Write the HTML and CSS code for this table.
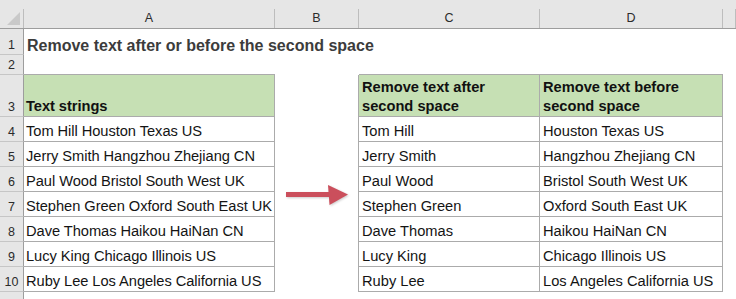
FILE: index.html
```html
<!DOCTYPE html>
<html>
<head>
<meta charset="utf-8">
<link rel="stylesheet" href="styles.css">
</head>
<body>
<div class="sheet">
  <div class="ch corner"><span><svg class="tri" width="13" height="13" viewBox="0 0 13 13"><polygon points="13,0 13,13 0,13" fill="#c9c9c9"/></svg></span></div>
  <div class="ch"><span>A</span></div>
  <div class="ch"><span>B</span></div>
  <div class="ch"><span>C</span></div>
  <div class="ch"><span>D</span></div>
  <div class="ch"><span></span></div>

  <div class="rh">1</div>
  <div class="title">Remove text after or before the second space</div>

  <div class="rh">2</div>
  <div class="cell top"></div>
  <div class="cell"></div>
  <div class="cell top"></div>
  <div class="cell top"></div>
  <div class="cell"></div>

  <div class="rh">3</div>
  <div class="cell t hd ca">Text strings</div>
  <div class="cell gap"></div>
  <div class="cell t hd">Remove text after<br>second space</div>
  <div class="cell t hd">Remove text before<br>second space</div>
  <div class="cell"></div>

  <div class="rh">4</div>
  <div class="cell t ca">Tom Hill Houston Texas US</div>
  <div class="cell gap"></div>
  <div class="cell t">Tom Hill</div>
  <div class="cell t">Houston Texas US</div>
  <div class="cell"></div>

  <div class="rh">5</div>
  <div class="cell t ca">Jerry Smith Hangzhou Zhejiang CN</div>
  <div class="cell gap"></div>
  <div class="cell t">Jerry Smith</div>
  <div class="cell t">Hangzhou Zhejiang CN</div>
  <div class="cell"></div>

  <div class="rh">6</div>
  <div class="cell t ca">Paul Wood Bristol South West UK</div>
  <div class="cell gap"></div>
  <div class="cell t">Paul Wood</div>
  <div class="cell t">Bristol South West UK</div>
  <div class="cell"></div>

  <div class="rh">7</div>
  <div class="cell t ca">Stephen Green Oxford South East UK</div>
  <div class="cell gap"></div>
  <div class="cell t">Stephen Green</div>
  <div class="cell t">Oxford South East UK</div>
  <div class="cell"></div>

  <div class="rh">8</div>
  <div class="cell t ca">Dave Thomas Haikou HaiNan CN</div>
  <div class="cell gap"></div>
  <div class="cell t">Dave Thomas</div>
  <div class="cell t">Haikou HaiNan CN</div>
  <div class="cell"></div>

  <div class="rh">9</div>
  <div class="cell t ca">Lucy King Chicago Illinois US</div>
  <div class="cell gap"></div>
  <div class="cell t">Lucy King</div>
  <div class="cell t">Chicago Illinois US</div>
  <div class="cell"></div>

  <div class="rh">10</div>
  <div class="cell t ca">Ruby Lee Los Angeles California US</div>
  <div class="cell gap"></div>
  <div class="cell t">Ruby Lee</div>
  <div class="cell t">Los Angeles California US</div>
  <div class="cell"></div>

  <div class="rh"></div>
  <div class="cell"></div>
  <div class="cell"></div>
  <div class="cell"></div>
  <div class="cell"></div>
  <div class="cell"></div>

  <svg class="arrow" width="70" height="30" viewBox="0 0 70 30">
    <rect x="2" y="10" width="45" height="5" fill="#cb4f5c"/>
    <polygon points="44,3 64,12.5 45.5,23" fill="#cb4f5c"/>
  </svg>
</div>
</body>
</html>
```

FILE: styles.css
```css
html, body {
  margin: 0;
  padding: 0;
  background: #ffffff;
  overflow: hidden;
}

.sheet {
  position: relative;
  display: grid;
  grid-template-columns: 24px 251px 84px 181px 183px 13px;
  grid-template-rows: 29px 26px 20px 42px repeat(7, 25px) 25px;
  font-family: "Liberation Sans", Arial, sans-serif;
  color: #141414;
  width: 736px;
  height: 299px;
  overflow: hidden;
}

.ch {
  background: #e6e6e6;
  border-bottom: 1px solid #9d9d9d;
  padding-top: 9px;
  box-sizing: border-box;
}

.ch span {
  display: block;
  height: 100%;
  box-sizing: border-box;
  border-right: 1px solid #bdbdbd;
  text-align: center;
  font-size: 12.5px;
  line-height: 19px;
  color: #2b2b2b;
}

.corner span {
  border-right-color: #bdbdbd;
  display: flex;
  align-items: flex-end;
  justify-content: flex-end;
  padding: 0 3px 3px 0;
}

.tri {
  display: block;
}

.rh {
  background: #e6e6e6;
  border-right: 1px solid #9d9d9d;
  border-bottom: 1px solid #c6c6c6;
  box-sizing: border-box;
  display: flex;
  align-items: flex-end;
  justify-content: center;
  font-size: 12.5px;
  line-height: 15px;
  padding-bottom: 1px;
  color: #2b2b2b;
}

.title {
  grid-column: 2 / -1;
  display: flex;
  align-items: flex-end;
  padding-left: 3px;
  font-size: 16px;
  font-weight: bold;
  line-height: 18px;
  color: #3c3c3c;
  white-space: nowrap;
}

.cell {
  box-sizing: border-box;
  display: flex;
  align-items: flex-end;
  font-size: 14.67px;
  line-height: 17px;
  padding: 0 0 1px 3px;
  white-space: nowrap;
}

.cell.ca {
  padding-left: 2px;
  letter-spacing: -0.05px;
}

.top {
  border-bottom: 1px solid #ababab;
}

.gap {
  border-right: 1px solid #ababab;
}

.t {
  border-right: 1px solid #ababab;
  border-bottom: 1px solid #ababab;
}

.hd {
  background: #c6e0b4;
  font-weight: bold;
  line-height: 19px;
  padding-bottom: 0;
  color: #111111;
}

.arrow {
  position: absolute;
  left: 284px;
  top: 182px;
  filter: drop-shadow(1px 1.5px 1px rgba(0, 0, 0, 0.2));
}
```
